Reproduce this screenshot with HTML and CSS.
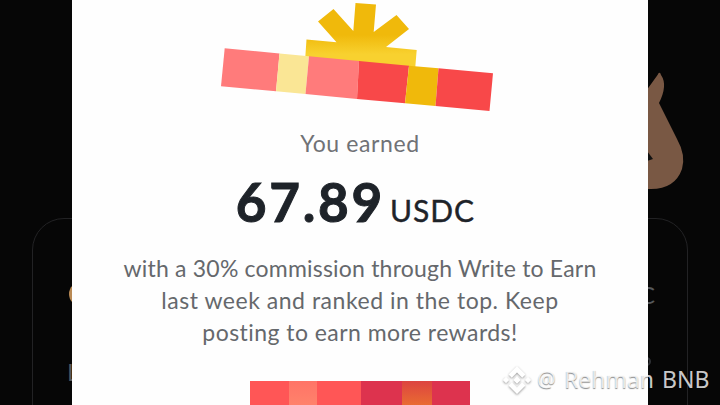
FILE: index.html
```html
<!DOCTYPE html>
<html lang="en">
<head>
  <meta charset="UTF-8" />
  <meta name="viewport" content="width=device-width, initial-scale=1.0"/>
  <title>Write to Earn</title>
  <link rel="stylesheet" href="styles.css">
</head>
<body>
  <div class="page">
    <svg class="mascot" viewBox="0 0 60 130" width="60" height="130">
      <path d="M0 49 L17 3 Q19 0 20 4 Q27 14 18 32 L36 68 Q45 84 41 98 Q34 118 10 118 L0 118 Z M0 27 L18 2 L18 32 L0 60 Z" fill="#795844"/>
      <path d="M6 80 L12 88 L6 90 Z" fill="#111"/>
    </svg>
    <div class="panel">
      <div class="row"><span class="coin"></span><span>C</span></div>
      <div class="row"><span>L</span><span class="mark"></span></div>
    </div>
  </div>

  <div class="modal">
    <svg class="gift" viewBox="210 0 300 120" width="300" height="120">
      <defs>
        <linearGradient id="gold" x1="0" y1="0" x2="0" y2="1">
          <stop offset="0.5" stop-color="#f0b90b"/>
          <stop offset="0.8" stop-color="#f8d12f"/>
        </linearGradient>
      </defs>
      <path d="M306.5 39.5 L336.5 42.3 L318 21.5 L333.5 9 L353.3 31 L355.5 3 L376 4.5 L373.7 32 L396.5 15 L409 29 L386 47 L416.7 50 L415.3 67 L305.3 57 Z" fill="url(#gold)"/>
      <path d="M224.7 48.3 L279.5 53.5 L276 91.2 L221 86.3 Z" fill="#ff7b7b"/>
      <path d="M279.5 53.5 L309 56.2 L305.5 94 L276 91.2 Z" fill="#fae695"/>
      <path d="M309 56.2 L359 61 L357 99 L305.5 94 Z" fill="#ff7b7b"/>
      <path d="M359 61 L409 65.7 L405 103.2 L357 99 Z" fill="#f84849"/>
      <path d="M409 65.7 L438.5 68.3 L435.5 106 L405 103.2 Z" fill="#f0b90b"/>
      <path d="M438.5 68.3 L493 73.3 L489.5 111 L435.5 106 Z" fill="#f84849"/>
    </svg>
    <p class="label">You earned</p>
    <div class="amount"><span class="value">67.89</span><span class="unit">USDC</span></div>
    <p class="message">
      <span class="line1">with a 30% commission through Write to Earn</span><br>
      <span class="line2">last week and ranked in the top. Keep</span><br>
      <span class="line3">posting to earn more rewards!</span>
    </p>
    <div class="box">
      <span class="light"></span>
      <span class="ribbon-light"></span>
      <span class="light"></span>
      <span class="dark"></span>
      <span class="ribbon-dark"></span>
      <span class="dark"></span>
    </div>
  </div>

  <div class="watermark">
    <svg class="logo" viewBox="0 0 30 30" width="30" height="30">
      <g fill="#fff">
        <path d="M15 1 L23.5 9.5 L20.2 12.8 L15 7.6 L9.8 12.8 L6.5 9.5 Z"/>
        <path d="M15 29 L23.5 20.5 L20.2 17.2 L15 22.4 L9.8 17.2 L6.5 20.5 Z"/>
        <path d="M4 11.8 L7.2 15 L4 18.2 L0.8 15 Z"/>
        <path d="M26 11.8 L29.2 15 L26 18.2 L22.8 15 Z"/>
        <path d="M15 11.3 L18.7 15 L15 18.7 L11.3 15 Z"/>
      </g>
    </svg>
    <span class="at">@</span>
    <span class="first">Rehman</span>
    <span class="last">BNB</span>
  </div>
</body>
</html>
```

FILE: styles.css
```css
* {
  box-sizing: border-box;
}

body {
  margin: 0;
  height: 405px;
  overflow: hidden;
  position: relative;
  background: #060606;
  font-family: Lato, "Liberation Sans", sans-serif;
}

.page {
  height: 405px;
  overflow: hidden;
  padding: 71px 32px 0;
}

.mascot {
  display: block;
  margin-left: 609px;
}

.panel {
  height: 260px;
  margin-top: 17px;
  border: 1px solid #222224;
  border-radius: 32px;
  padding: 60px 32px 0 34px;
  color: #55585c;
  font-size: 24px;
}

.row {
  display: flex;
  justify-content: space-between;
  align-items: center;
  height: 30px;
  margin-bottom: 47px;
}

.coin {
  width: 24px;
  height: 24px;
  margin-left: 2px;
  border-radius: 50%;
  background: #b98a55;
}

.mark {
  width: 9px;
  height: 9px;
  margin: 0 4px 20px 0;
  border: 2px solid #303236;
  border-radius: 50%;
}

.modal {
  position: absolute;
  top: 0;
  left: 72px;
  width: 576px;
  height: 405px;
  overflow: hidden;
  background: #fefefe;
  display: flex;
  flex-direction: column;
  align-items: center;
  text-align: center;
}

.gift {
  flex: none;
}

.label {
  margin: 7px 0 0;
  font-size: 23px;
  line-height: 32px;
  letter-spacing: 0.6px;
  color: #707276;
}

.amount {
  display: flex;
  align-items: baseline;
  height: 64px;
  margin-top: 11px;
  margin-right: 9px;
  line-height: 64px;
  color: #1e2329;
}

.value {
  font-size: 53px;
  font-weight: 700;
  letter-spacing: 2.7px;
  -webkit-text-stroke: 1px #1e2329;
}

.unit {
  margin-left: 5px;
  font-size: 30px;
  letter-spacing: 1px;
  -webkit-text-stroke: 0.4px #1e2329;
}

.message {
  margin: 18px 0 0;
  font-size: 23px;
  line-height: 32px;
  color: #65686c;
  white-space: nowrap;
}

.line1 {
  letter-spacing: 0.2px;
}

.line2 {
  letter-spacing: 0.52px;
}

.line3 {
  letter-spacing: 0.45px;
}

.box {
  flex: none;
  display: grid;
  grid-template-columns: 39px 28px 44px 41px 30px 38px;
  width: 220px;
  height: 40px;
  margin-top: 33px;
}

.light {
  background: #ff5656;
}

.ribbon-light {
  background: linear-gradient(#ff7467, #ff826b 24px);
}

.dark {
  background: #dd334e;
}

.ribbon-dark {
  background: linear-gradient(#dd4440, #e96b32 24px);
}

.watermark {
  position: absolute;
  left: 502px;
  top: 363px;
  display: flex;
  align-items: center;
  height: 32px;
  font-family: "Noto Sans", sans-serif;
  font-size: 23px;
  color: rgba(255, 255, 255, 0.8);
  text-shadow: 0 1px 1px rgba(0, 0, 0, 0.45);
}

.logo {
  margin-top: 2px;
  filter: drop-shadow(0 1px 1px rgba(0, 0, 0, 0.4));
}

.at {
  margin-left: 5px;
  font-size: 21px;
}

.first {
  margin-left: 8px;
}

.last {
  margin-left: 8px;
}
```
